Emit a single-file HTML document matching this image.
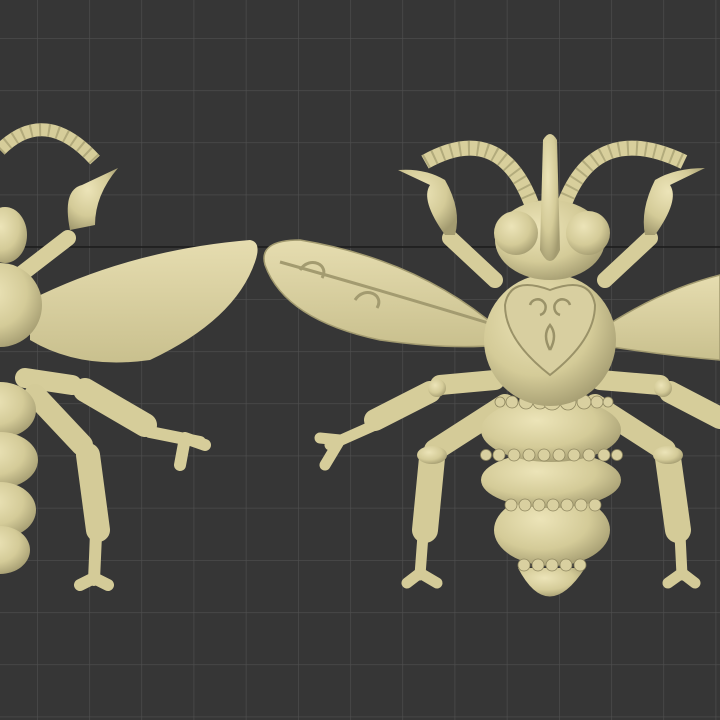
<!DOCTYPE html>
<html><head><style>
html,body{margin:0;padding:0;background:#363636;overflow:hidden}
svg{display:block}
</style></head><body>
<svg width="720" height="720" viewBox="0 0 720 720" xmlns="http://www.w3.org/2000/svg">
<defs>
<pattern id="g" x="37" y="38" width="52.2" height="52.2" patternUnits="userSpaceOnUse">
<path d="M0 0V52.2M0 0H52.2" stroke="#505050" stroke-width="1.2" fill="none"/>
</pattern>
<radialGradient id="b" cx="0.4" cy="0.35" r="0.7">
<stop offset="0" stop-color="#ece4b8"/><stop offset="0.6" stop-color="#d4cb98"/><stop offset="1" stop-color="#a39b70"/>
</radialGradient>
<linearGradient id="w" x1="0" y1="0" x2="0" y2="1">
<stop offset="0" stop-color="#e6ddb0"/><stop offset="1" stop-color="#c9c08e"/>
</linearGradient>
</defs>
<rect width="720" height="720" fill="#363636"/>
<rect width="720" height="720" fill="url(#g)"/>
<line x1="0" y1="247" x2="720" y2="247" stroke="#1a1a1a" stroke-width="1.5"/>

<!-- LEFT BEE -->
<g fill="url(#b)" stroke="none">
<path d="M0 150 Q45 105 95 160" fill="none" stroke="#d6cd9a" stroke-width="13"/>
<path d="M0 150 Q45 105 95 160" fill="none" stroke="#9a9268" stroke-width="13" stroke-dasharray="2 7" opacity="0.6"/>
<path d="M20 275 L68 238" fill="none" stroke="#d8cf9c" stroke-width="16" stroke-linecap="round"/>
<path d="M70 230 Q62 190 82 185 L118 168 Q95 195 95 225 Z" fill="url(#b)"/>
<path d="M30 300 Q130 250 250 240 Q262 242 255 262 Q235 320 150 360 Q80 370 30 340 Z" fill="url(#w)"/>
<circle cx="0" cy="305" r="42"/>
<ellipse cx="5" cy="235" rx="22" ry="28"/>
<path d="M25 378 L72 385" fill="none" stroke="#d6cd9a" stroke-width="20" stroke-linecap="round"/>
<path d="M85 390 L145 425" fill="none" stroke="#d6cd9a" stroke-width="24" stroke-linecap="round"/>
<path d="M150 432 L200 442 M185 438 L180 465 M185 438 L205 445" fill="none" stroke="#d6cd9a" stroke-width="12" stroke-linecap="round"/>
<path d="M35 395 L82 445" fill="none" stroke="#d4cb98" stroke-width="22" stroke-linecap="round"/>
<path d="M88 455 L98 530" fill="none" stroke="#d4cb98" stroke-width="24" stroke-linecap="round"/>
<path d="M96 535 L94 580 M94 578 L80 585 M94 578 L108 585" fill="none" stroke="#d4cb98" stroke-width="12" stroke-linecap="round"/>
<ellipse cx="0" cy="410" rx="36" ry="28"/>
<ellipse cx="0" cy="460" rx="38" ry="28"/>
<ellipse cx="0" cy="510" rx="36" ry="28"/>
<ellipse cx="0" cy="550" rx="30" ry="24"/>
</g>

<!-- RIGHT BEE -->
<g>
<path d="M532 205 Q500 120 425 162" fill="none" stroke="#d8cf9c" stroke-width="15"/>
<path d="M564 205 Q596 120 684 162" fill="none" stroke="#d8cf9c" stroke-width="15"/>
<path d="M532 205 Q500 120 425 162" fill="none" stroke="#9a9268" stroke-width="15" stroke-dasharray="2 7" opacity="0.6"/>
<path d="M564 205 Q596 120 684 162" fill="none" stroke="#9a9268" stroke-width="15" stroke-dasharray="2 7" opacity="0.6"/>
<path d="M495 280 L450 238" fill="none" stroke="#d6cd9a" stroke-width="16" stroke-linecap="round"/>
<path d="M605 280 L650 238" fill="none" stroke="#d6cd9a" stroke-width="16" stroke-linecap="round"/>
<path d="M445 235 Q420 200 430 185 L398 170 Q425 168 445 180 Q462 210 455 235 Z" fill="url(#b)"/>
<path d="M655 235 Q680 200 670 185 L705 168 Q675 168 655 180 Q640 210 645 235 Z" fill="url(#b)"/>
<path d="M500 330 Q420 260 300 240 Q258 240 265 265 Q285 320 380 340 Q450 350 500 345 Z" fill="url(#w)" stroke="#a39b70" stroke-width="1.5"/>
<path d="M600 330 Q660 290 720 275 L720 360 Q660 355 600 345 Z" fill="url(#w)" stroke="#a39b70" stroke-width="1.5"/>
<path d="M300 270 c10-15 30-5 22 8 M355 300 c10-15 30-5 22 8 M280 262 Q380 290 495 325" fill="none" stroke="#a39b70" stroke-width="3"/>
<path d="M495 380 L440 385" fill="none" stroke="#d6cd9a" stroke-width="20" stroke-linecap="round"/>
<path d="M430 392 L375 420" fill="none" stroke="#d6cd9a" stroke-width="22" stroke-linecap="round"/>
<path d="M375 425 L330 445 M340 440 L325 465 M340 440 L320 438" fill="none" stroke="#d6cd9a" stroke-width="11" stroke-linecap="round"/>
<path d="M600 380 L660 385" fill="none" stroke="#d6cd9a" stroke-width="20" stroke-linecap="round"/>
<path d="M670 392 L720 418" fill="none" stroke="#d6cd9a" stroke-width="22" stroke-linecap="round"/>
<path d="M505 405 L435 450" fill="none" stroke="#d4cb98" stroke-width="22" stroke-linecap="round"/>
<path d="M432 458 L425 530" fill="none" stroke="#d4cb98" stroke-width="26" stroke-linecap="round"/>
<path d="M423 535 L420 575 M420 573 L407 583 M420 573 L437 583" fill="none" stroke="#d4cb98" stroke-width="11" stroke-linecap="round"/>
<path d="M595 405 L665 450" fill="none" stroke="#d4cb98" stroke-width="22" stroke-linecap="round"/>
<path d="M668 458 L678 530" fill="none" stroke="#d4cb98" stroke-width="26" stroke-linecap="round"/>
<path d="M680 535 L682 575 M682 573 L668 583 M682 573 L695 583" fill="none" stroke="#d4cb98" stroke-width="11" stroke-linecap="round"/>
<circle cx="437" cy="388" r="9" fill="url(#b)"/><circle cx="663" cy="388" r="9" fill="url(#b)"/>
<ellipse cx="432" cy="455" rx="15" ry="9" fill="url(#b)"/><ellipse cx="668" cy="455" rx="15" ry="9" fill="url(#b)"/>
<path d="M518 568 Q548 625 585 568 Z" fill="url(#b)"/>
<ellipse cx="552" cy="530" rx="58" ry="36" fill="url(#b)"/>
<ellipse cx="551" cy="480" rx="70" ry="28" fill="url(#b)"/>
<ellipse cx="551" cy="430" rx="70" ry="32" fill="url(#b)"/>
<g fill="#d9d0a0" stroke="#8f8760" stroke-width="0.8">
<circle cx="500" cy="402" r="5"/><circle cx="512" cy="402" r="6"/><circle cx="526" cy="402" r="7"/><circle cx="540" cy="402" r="7"/><circle cx="552" cy="401" r="9"/><circle cx="568" cy="402" r="8"/><circle cx="584" cy="402" r="7"/><circle cx="597" cy="402" r="6"/><circle cx="608" cy="402" r="5"/>
<circle cx="486" cy="455" r="5.5"/><circle cx="499" cy="455" r="6"/><circle cx="514" cy="455" r="6"/><circle cx="529" cy="455" r="6"/><circle cx="544" cy="455" r="6"/><circle cx="559" cy="455" r="6"/><circle cx="574" cy="455" r="6"/><circle cx="589" cy="455" r="6"/><circle cx="604" cy="455" r="6"/><circle cx="617" cy="455" r="5.5"/>
<circle cx="511" cy="505" r="6"/><circle cx="525" cy="505" r="6"/><circle cx="539" cy="505" r="6"/><circle cx="553" cy="505" r="6"/><circle cx="567" cy="505" r="6"/><circle cx="581" cy="505" r="6"/><circle cx="595" cy="505" r="6"/>
<circle cx="524" cy="565" r="6"/><circle cx="538" cy="565" r="6"/><circle cx="552" cy="565" r="6"/><circle cx="566" cy="565" r="6"/><circle cx="580" cy="565" r="6"/>
</g>
<circle cx="550" cy="340" r="66" fill="url(#b)"/>
<path d="M550 375 Q505 340 505 305 Q510 275 550 290 Q590 275 595 305 Q595 340 550 375 Z" fill="#d8cfa0" stroke="#9a9268" stroke-width="2"/>
<path d="M530 305 a8 8 0 1 1 10 10 M570 305 a8 8 0 1 0 -10 10 M550 350 q-8-15 0-25 q8 10 0 25" fill="none" stroke="#9a9268" stroke-width="2.5"/>
<ellipse cx="550" cy="240" rx="55" ry="40" fill="url(#b)"/>
<circle cx="516" cy="233" r="22" fill="url(#b)"/>
<circle cx="588" cy="233" r="22" fill="url(#b)"/>
<path d="M543 140 Q550 128 557 140 L560 250 Q550 272 540 250 Z" fill="url(#b)"/>
</g>
</svg>
</body></html>
